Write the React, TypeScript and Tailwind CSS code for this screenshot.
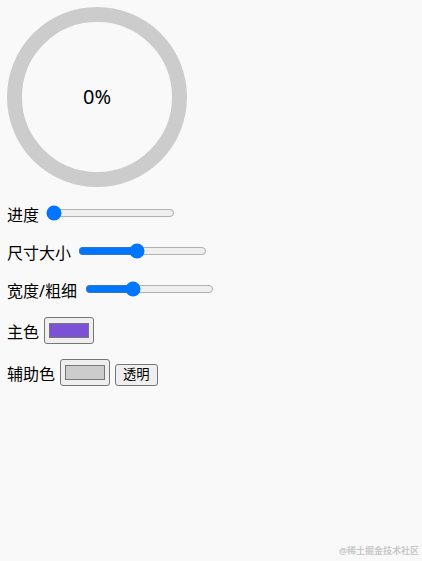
import { useState } from "react";

const font = { fontFamily: '"Noto Sans", "Noto Sans CJK SC", sans-serif' };

function Ring({ progress, size, width }: { progress: number; size: number; width: number }) {
  const r = (size - width) / 2;
  const c = 2 * Math.PI * r;
  return (
    <svg width={size} height={size} viewBox={`0 0 ${size} ${size}`} className="block">
      <circle cx={size / 2} cy={size / 2} r={r} fill="none" stroke="#cccccc" strokeWidth={width} />
      {progress > 0 && (
        <circle
          cx={size / 2}
          cy={size / 2}
          r={r}
          fill="none"
          stroke="#7b52d6"
          strokeWidth={width}
          strokeDasharray={`${(c * progress) / 100} ${c}`}
          transform={`rotate(-90 ${size / 2} ${size / 2})`}
        />
      )}
      <text
        x={size / 2}
        y={size / 2 - 1}
        textAnchor="middle"
        dominantBaseline="central"
        fontSize="20"
        fill="#000"
        style={font}
      >
        {progress}%
      </text>
    </svg>
  );
}

export default function App() {
  const [progress, setProgress] = useState(0);
  const [size, setSize] = useState(45);
  const [thick, setThick] = useState(35);
  const [main, setMain] = useState("#7b52d6");
  const [sub, setSub] = useState("#cccccc");

  const colorCls =
    "h-[27px] w-[50px] cursor-pointer rounded-[3px] border border-[#767676] bg-[#efefef] px-[2px] py-[1px]";

  return (
    <div className="relative h-[561px] bg-[#f9f9f9] text-[16px] text-black" style={font}>
      <div className="px-[7px] pt-[7px]">
        <Ring progress={progress} size={180} width={15} />
        <div className="mt-[7px]">
          <div className="flex h-[38px] items-center">
            <span className="pt-[4px]">进度</span>
            <input type="range" className="ml-[7px] w-[129px]" value={progress} onChange={(e) => setProgress(Number(e.target.value))} />
          </div>
          <div className="flex h-[38px] items-center">
            <span className="pt-[4px]">尺寸大小</span>
            <input type="range" className="ml-[7px] w-[129px]" value={size} onChange={(e) => setSize(Number(e.target.value))} />
          </div>
          <div className="flex h-[38px] items-center">
            <span className="pt-[4px]">宽度/粗细</span>
            <input type="range" className="ml-[8px] w-[129px]" value={thick} onChange={(e) => setThick(Number(e.target.value))} />
          </div>
          <div className="mt-[1px] flex h-[42px] items-center">
            <span className="pt-[4px]">主色</span>
            <input type="color" className={`ml-[5px] ${colorCls}`} value={main} onChange={(e) => setMain(e.target.value)} />
          </div>
          <div className="flex h-[42px] items-center">
            <span className="pt-[4px]">辅助色</span>
            <input type="color" className={`ml-[5px] ${colorCls}`} value={sub} onChange={(e) => setSub(e.target.value)} />
            <button
              className="mb-[7px] ml-[5px] h-[22px] self-end rounded-[3px] border border-[#767676] bg-[#efefef] px-[7px] text-[13.33px] leading-none"
              onClick={() => setSub("#cccccc")}
            >
              透明
            </button>
          </div>
        </div>
      </div>
      <span className="absolute bottom-[4px] right-[3px] text-[9px] font-semibold text-[#c8c8c8]">@稀土掘金技术社区</span>
    </div>
  );
}
